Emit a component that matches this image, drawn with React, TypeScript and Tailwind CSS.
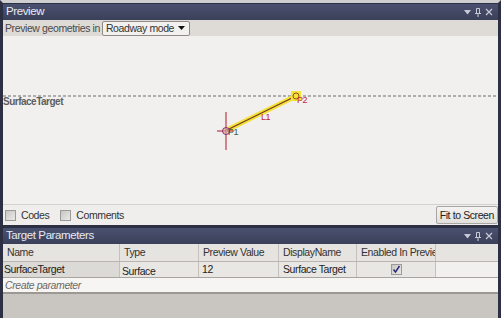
import React from 'react';

// パネルのタイトルバー
const TitleBar = ({ title }: { title: string }) => (
  <div className="flex h-4 shrink-0 items-center justify-between bg-gradient-to-b from-[#4a5170] to-[#3a4059] px-[3px] text-[11.5px] leading-none text-[#e8ebf4]">
    <span>{title}</span>
    <div className="flex items-center gap-[4px] pr-[2px] text-[#c8cbd6]">
      <svg width="7" height="5" viewBox="0 0 7 5">
        <path d="M0 0h7L3.5 4.5z" fill="currentColor" />
      </svg>
      <svg width="6" height="9" viewBox="0 0 6 9">
        <path d="M1.5 0.5h3v5h-3zM0 5.5h6M3 5.5v3.5" stroke="currentColor" fill="none" strokeWidth="1" />
      </svg>
      <svg width="8" height="8" viewBox="0 0 8 8">
        <path d="M1 1l6 6M7 1l-6 6" stroke="currentColor" strokeWidth="1.2" />
      </svg>
    </div>
  </div>
);

const Checkbox = ({ label, checked }: { label?: string; checked?: boolean }) => (
  <label className="flex items-center gap-[5px]">
    <span className="flex h-[11px] w-[11px] items-center justify-center border border-[#9a9a9a] bg-gradient-to-br from-[#c8c6c2] to-[#eceae6]">
      {checked && (
        <svg width="9" height="9" viewBox="0 0 9 9">
          <path d="M1.5 4.5l2 2.5L7.5 1" stroke="#27277a" strokeWidth="1.4" fill="none" />
        </svg>
      )}
    </span>
    {label && <span>{label}</span>}
  </label>
);

// プレビュー描画
const PreviewCanvas = () => (
  <div className="relative h-[168px] shrink-0 bg-[#f1f0ee]">
    <svg className="absolute inset-0" width="495" height="168">
      <line x1="0" y1="60" x2="495" y2="60" stroke="#6d6d6d" strokeWidth="1" strokeDasharray="3 2" />
      <line x1="222" y1="95" x2="293" y2="60" stroke="#f3e23a" strokeWidth="5" strokeLinecap="round" />
      <line x1="222" y1="95" x2="293" y2="60" stroke="#7a3a20" strokeWidth="1.3" />
      <rect x="288" y="55" width="10" height="10" fill="#f3e23a" />
      <circle cx="293" cy="60" r="3" fill="none" stroke="#9a4a1a" strokeWidth="1" />
      <line x1="223" y1="76" x2="223" y2="114" stroke="#c0394a" strokeWidth="1.2" />
      <line x1="214" y1="95" x2="230" y2="95" stroke="#c0394a" strokeWidth="1.2" />
      <circle cx="223" cy="95" r="3.5" fill="#d7b0d8" fillOpacity="0.6" stroke="#8a2f70" strokeWidth="1" />
    </svg>
    <span className="absolute left-0 top-[61px] text-[10px] font-semibold tracking-[-0.5px] text-[#5e5e5e]">SurfaceTarget</span>
    <span className="absolute left-[258px] top-[77px] text-[9px] text-[#c0283a]">L1</span>
    <span className="absolute left-[294px] top-[60px] text-[9px] text-[#c0283a]">P2</span>
    <span className="absolute left-[225px] top-[92px] text-[9px] text-[#3c5a3c]">P1</span>
  </div>
);

const columns = [
  { name: 'Name', w: 'w-[117px]' },
  { name: 'Type', w: 'w-[79px]' },
  { name: 'Preview Value', w: 'w-[80px]' },
  { name: 'DisplayName', w: 'w-[78px]' },
  { name: 'Enabled In Previe', w: 'w-[79px]' },
];

export default function App() {
  return (
    <div
      className="flex h-[318px] w-[501px] flex-col overflow-hidden whitespace-nowrap border-x-[3px] border-b-0 border-t-[3px] border-x-[#2c3042] border-t-[#cfcfd2] bg-[#2c3042] text-[10.5px] leading-none tracking-[-0.4px] text-[#2e2e2e]"
      style={{ fontFamily: '"Liberation Sans", Arial, sans-serif' }}
    >
      <div className="h-px shrink-0 bg-[#2c3042]" />
      <TitleBar title="Preview" />
      <div className="flex h-[16px] shrink-0 items-center gap-[2px] bg-[#dedbd6] px-[2px] text-[#4a4a4a]">
        <span>Preview geometries in</span>
        <div className="flex h-[15px] w-[88px] items-center justify-between rounded-[2px] border border-[#8f8c88] bg-[#f2f1ef] pl-[3px] pr-[4px] text-[#333]">
          <span>Roadway mode</span>
          <svg width="7" height="4" viewBox="0 0 7 4">
            <path d="M0 0h7L3.5 4z" fill="#111" />
          </svg>
        </div>
      </div>
      <PreviewCanvas />
      <div className="flex h-[21px] shrink-0 items-center justify-between border-t border-[#d4d2ce] bg-[#efeeec] pl-[2px] text-[#333]">
        <div className="flex items-center gap-[11px]">
          <Checkbox label="Codes" />
          <Checkbox label="Comments" />
        </div>
        <button className="h-[18px] rounded-[2px] border border-[#a8a6a2] bg-gradient-to-b from-[#f4f3f1] to-[#e2e0dc] px-[3px] text-[10.5px] leading-none text-[#222]">
          Fit to Screen
        </button>
      </div>
      <div className="h-[3px] shrink-0 bg-[#2c3042]" />
      <TitleBar title="Target Parameters" />
      <div className="flex h-[18px] shrink-0 border-b border-[#b9b6b1] bg-[#e6e4e0] text-[#333]">
        {columns.map((c) => (
          <div key={c.name} className={`${c.w} flex items-center overflow-hidden border-r border-[#c4c1bc] px-[4px]`}>
            {c.name}
          </div>
        ))}
        <div className="flex-1" />
      </div>
      <div className="flex h-[16px] shrink-0 border-b border-[#a8a5a0] bg-[#e9e7e3] text-[#222]">
        <div className="flex w-[117px] items-center border-r border-[#c4c1bc] bg-[#dcdad6] px-[1px]">SurfaceTarget</div>
        <div className="flex w-[79px] items-end border-r border-[#c4c1bc] px-[2px] pb-[1px]">Surface</div>
        <div className="flex w-[80px] items-center border-r border-[#c4c1bc] px-[3px]">12</div>
        <div className="flex w-[78px] items-center border-r border-[#c4c1bc] px-[4px]">Surface Target</div>
        <div className="flex w-[79px] items-center justify-center border-r border-[#c4c1bc]">
          <Checkbox checked />
        </div>
        <div className="flex-1 bg-[#f1f0ee]" />
      </div>
      <div className="flex h-[16px] shrink-0 items-center border-b-2 border-[#9c9994] bg-[#f6f5f3] px-[2px] italic text-[#6a6a6a]">
        Create parameter
      </div>
      <div className="flex-1 bg-[#c9c5c0]" />
    </div>
  );
}
